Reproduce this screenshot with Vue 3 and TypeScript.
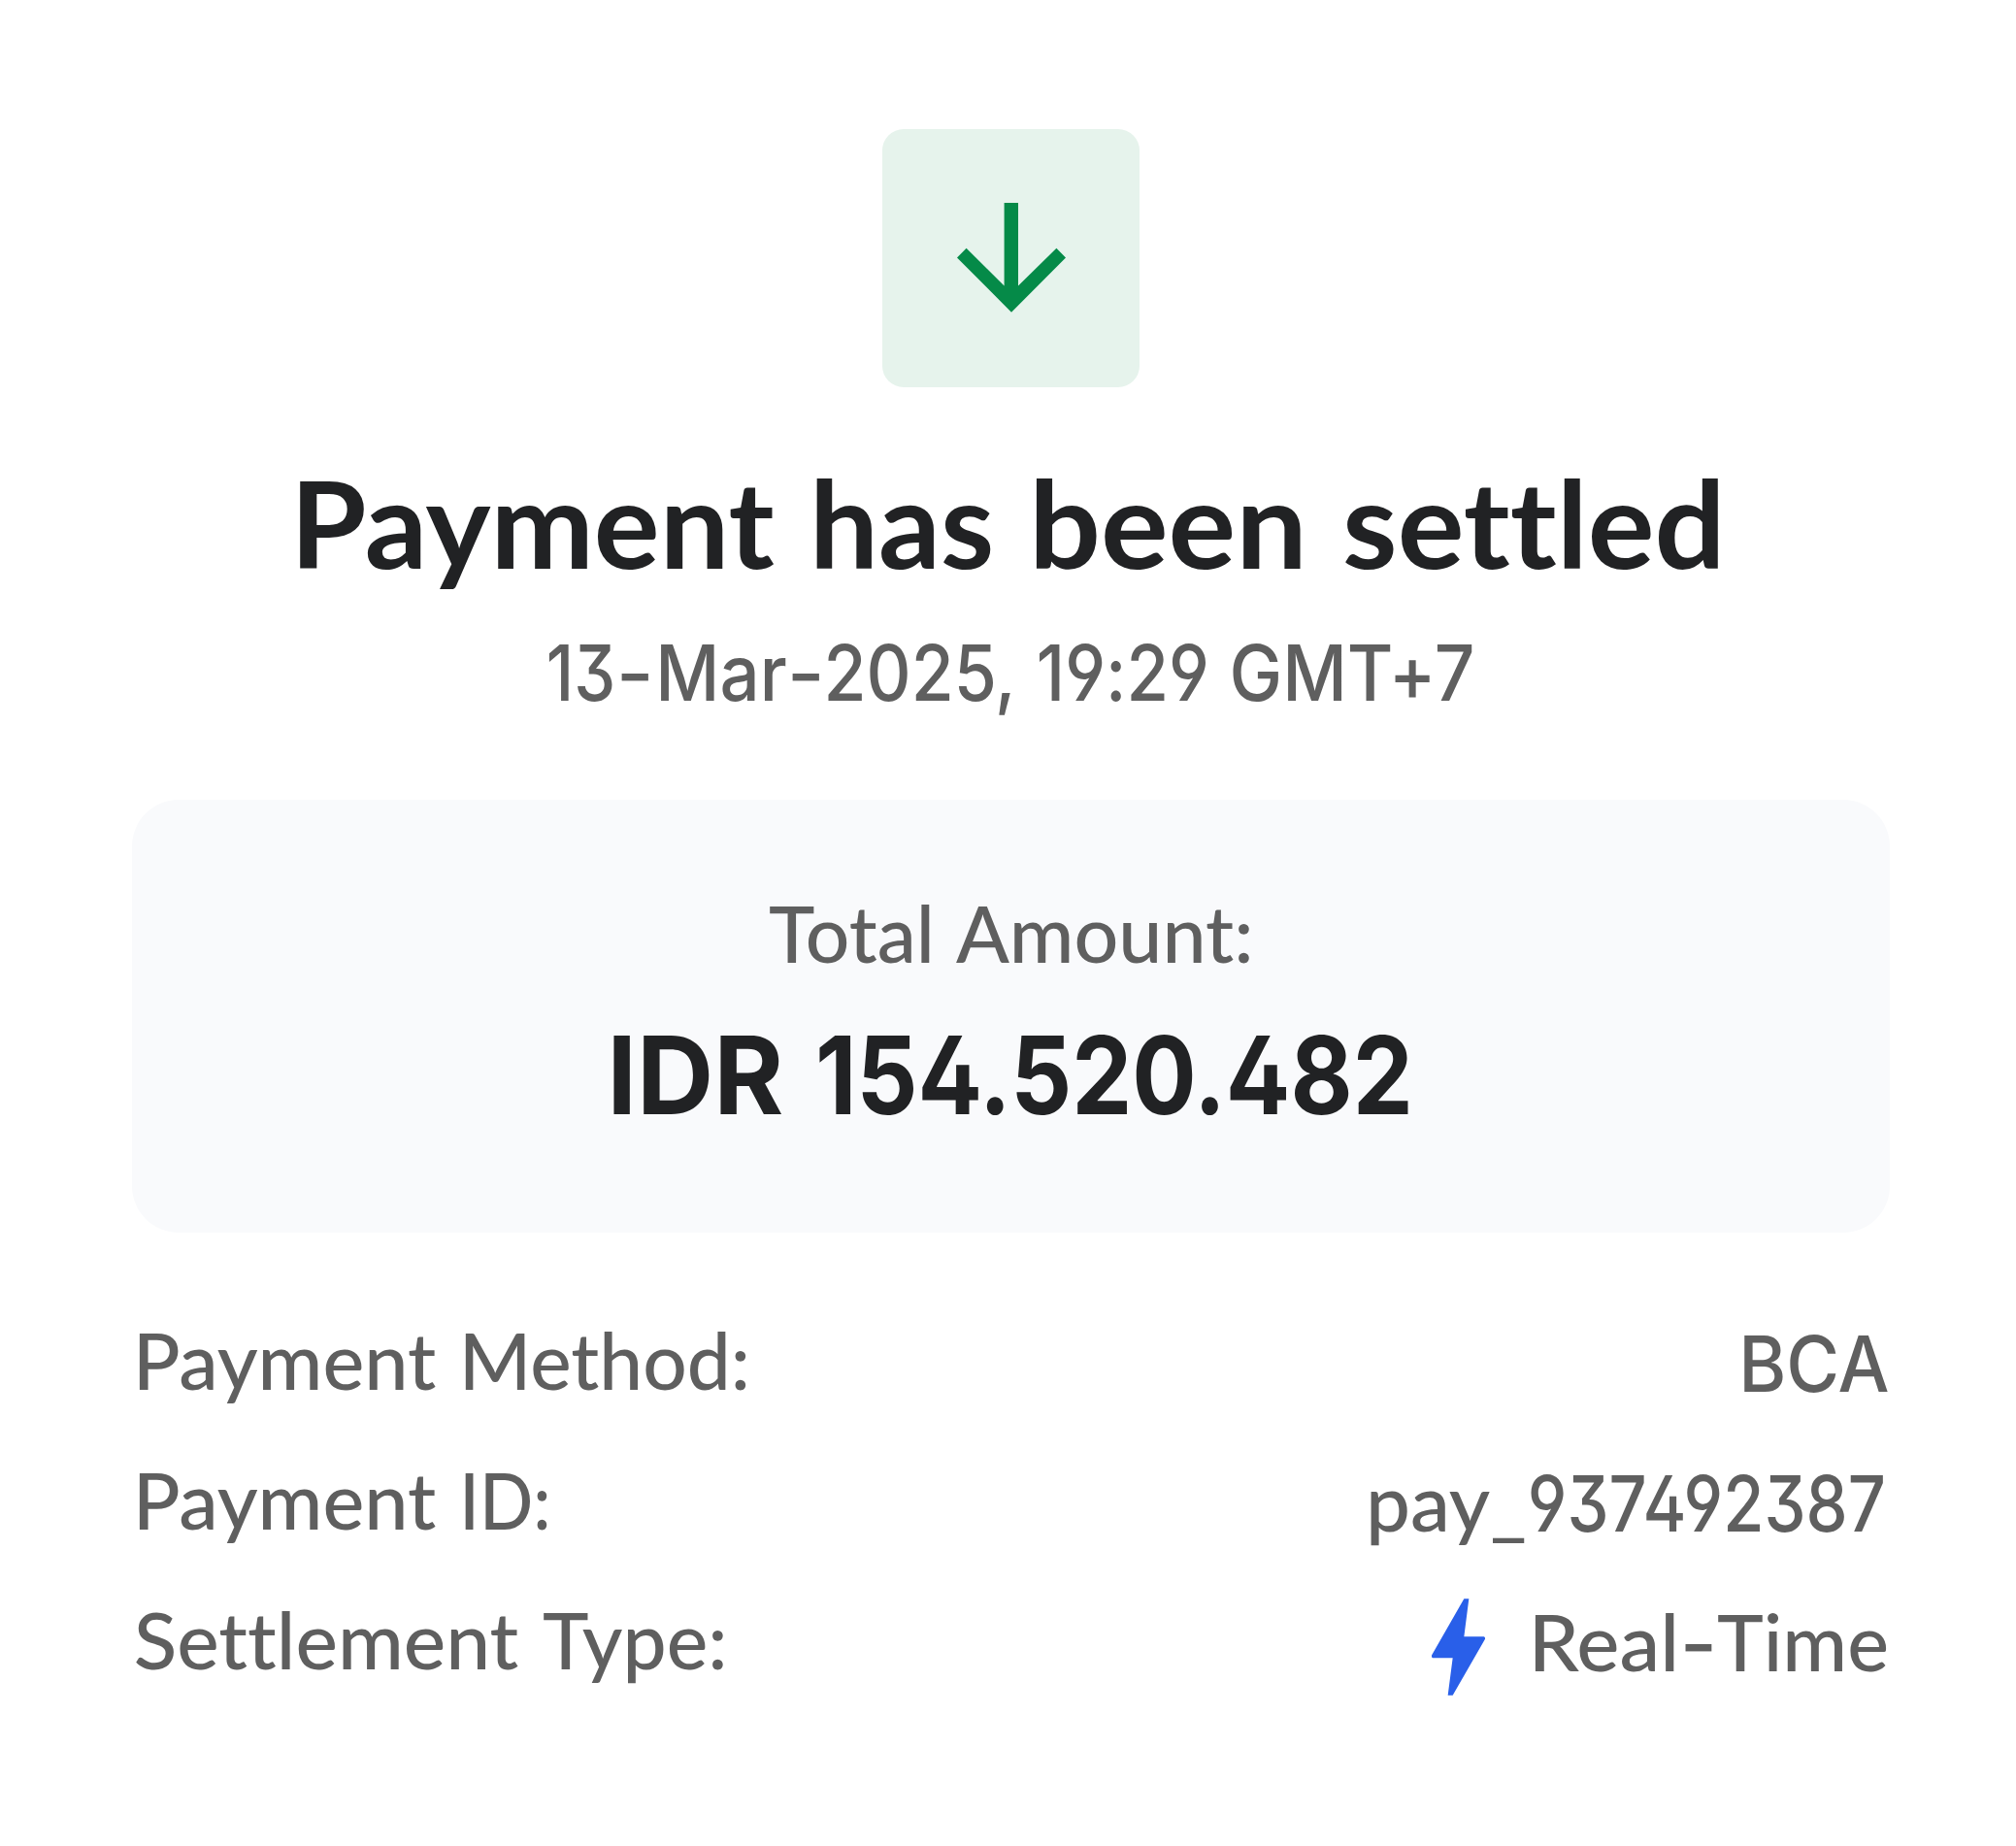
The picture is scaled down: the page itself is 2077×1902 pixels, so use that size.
<script setup lang="ts">
type Face = 'text' | 'figure'

interface Word {
  text: string
  /* Visible width of the word, in px */
  width: number
  /* Space in front of the word, in px */
  gap: number
  face: Face
  /* True when the word continues the previous one without a space */
  joined?: boolean
}

interface Fitted extends Word {
  scale: number
  shift: number
}

const ctx = document.createElement('canvas').getContext('2d')!

/* Sets every word to its visible width, whatever the installed face's own widths are. */
function fit(words: Word[], size: number, bold = false): Fitted[] {
  return words.map((word) => {
    const family = word.face === 'figure' ? 'Inter' : 'Lato'
    const weight = bold ? 700 : 500
    const fontSize = word.face === 'figure' ? size * 0.985 : size
    ctx.font = `${weight} 1000px "${family}"`
    // Non-zero tracking switches ligatures off, as the stylesheet does
    ctx.letterSpacing = '0.01px'
    const m = ctx.measureText(word.text)
    const left = (-m.actualBoundingBoxLeft * fontSize) / 1000
    const ink = ((m.actualBoundingBoxLeft + m.actualBoundingBoxRight) * fontSize) / 1000
    const scale = word.width / ink
    return { ...word, scale, shift: -left * scale }
  })
}

const t = (text: string, width: number, gap: number): Word => ({ text, width, gap, face: 'text' })
const f = (text: string, width: number, gap: number): Word => ({ text, width, gap, face: 'figure' })
const j = (word: Word): Word => ({ ...word, joined: true })

const title = fit([t('Payment', 489, -3), t('has', 182, 42.5), t('been', 274.4, 44), t('settled', 386, 44.6)], 124, true)

const date = fit(
  [
    f('13', 65.8, -1),
    j(f('-', 29, 9.2)),
    j(f('Mar', 128.8, 12.2)),
    j(f('-', 29, 7)),
    j(f('2025,', 188.8, 8)),
    f('19:29', 177.5, 27.7),
    f('GMT+7', 246.5, 23),
  ],
  80.5,
)

const amountLabel = fit([t('Total', 165.5, -3.5), t('Amount:', 302.5, 28)], 80.5)
const amount = fit([f('IDR', 173.5, 0.3), f('154.520.482', 607.7, 37)], 113, true)

const details = [
  {
    label: fit([t('Payment', 306, 7), t('Method:', 290, 29.5)], 80.5),
    value: fit([f('BCA', 148, 0)], 80.5),
    inset: 1.5,
    instant: false,
  },
  {
    label: fit([t('Payment', 306, 7), t('ID:', 85, 29.5)], 80.5),
    value: fit([t('pay_', 159, 0), j(f('937492387', 371, 5.5))], 80.5),
    inset: -1,
    instant: false,
  },
  {
    label: fit([t('Settlement', 395, 3), t('Type:', 186.5, 25)], 80.5),
    value: fit([t('Real', 143.5, 0), j(f('-', 28.5, 11.5)), j(t('Time', 174.5, 4.5))], 80.5),
    inset: 3,
    instant: true,
  },
]
</script>

<template>
  <main class="receipt">
    <div class="badge">
      <svg class="arrow" viewBox="0 0 112 113" aria-hidden="true">
        <path d="M48.6 0H63V85.6L102.4 46.8L112 56.4L56 112.7L0 56.4L9.6 46.8L48.6 85.6Z" />
      </svg>
    </div>

    <h1 class="line title">
      <template v-for="(w, i) in title" :key="i"
        ><span class="gap" :style="{ marginRight: w.gap + 'px' }">{{ i && !w.joined ? ' ' : '' }}</span
        ><span class="word" :class="w.face" :style="{ width: w.width + 'px' }"
          ><span class="ink" :style="{ transform: `translateX(${w.shift}px) scaleX(${w.scale})` }">{{ w.text }}</span></span
        ></template
      >
    </h1>

    <p class="line date">
      <template v-for="(w, i) in date" :key="i"
        ><span class="gap" :style="{ marginRight: w.gap + 'px' }">{{ i && !w.joined ? ' ' : '' }}</span
        ><span class="word" :class="w.face" :style="{ width: w.width + 'px' }"
          ><span class="ink" :style="{ transform: `translateX(${w.shift}px) scaleX(${w.scale})` }">{{ w.text }}</span></span
        ></template
      >
    </p>

    <section class="panel">
      <p class="line">
        <template v-for="(w, i) in amountLabel" :key="i"
          ><span class="gap" :style="{ marginRight: w.gap + 'px' }">{{ i && !w.joined ? ' ' : '' }}</span
          ><span class="word" :class="w.face" :style="{ width: w.width + 'px' }"
            ><span class="ink" :style="{ transform: `translateX(${w.shift}px) scaleX(${w.scale})` }">{{ w.text }}</span></span
          ></template
        >
      </p>
      <p class="line amount">
        <template v-for="(w, i) in amount" :key="i"
          ><span class="gap" :style="{ marginRight: w.gap + 'px' }">{{ i && !w.joined ? ' ' : '' }}</span
          ><span class="word" :class="w.face" :style="{ width: w.width + 'px' }"
            ><span class="ink" :style="{ transform: `translateX(${w.shift}px) scaleX(${w.scale})` }">{{ w.text }}</span></span
          ></template
        >
      </p>
    </section>

    <dl class="details">
      <div v-for="(row, r) in details" :key="r" class="row">
        <dt class="line">
          <template v-for="(w, i) in row.label" :key="i"
            ><span class="gap" :style="{ marginRight: w.gap + 'px' }">{{ i && !w.joined ? ' ' : '' }}</span
            ><span class="word" :class="w.face" :style="{ width: w.width + 'px' }"
              ><span class="ink" :style="{ transform: `translateX(${w.shift}px) scaleX(${w.scale})` }">{{ w.text }}</span></span
            ></template
          >
        </dt>
        <dd class="value" :style="{ marginRight: row.inset + 'px' }">
          <svg v-if="row.instant" class="bolt" viewBox="0 0 165 299" aria-hidden="true">
            <path d="M100 0H115L100 117H161Q166 118 165 125L65 299H50L65 183H3Q-1 182 0 175Z" />
          </svg>
          <span class="line"
            ><template v-for="(w, i) in row.value" :key="i"
              ><span class="gap" :style="{ marginRight: w.gap + 'px' }">{{ i && !w.joined ? ' ' : '' }}</span
              ><span class="word" :class="w.face" :style="{ width: w.width + 'px' }"
                ><span class="ink" :style="{ transform: `translateX(${w.shift}px) scaleX(${w.scale})` }">{{ w.text }}</span></span
              ></template
            ></span
          >
        </dd>
      </div>
    </dl>
  </main>
</template>

<style>
body {
  margin: 0;
  background: #ffffff;
}
</style>

<style scoped>
.receipt {
  --size: 80.5px;
  box-sizing: border-box;
  display: flex;
  flex-direction: column;
  align-items: stretch;
  width: 2077px;
  height: 1902px;
  padding: 133px 130.5px 0 136px;
  overflow: hidden;
  background: #ffffff;
  color: #5f5f5f;
}

.badge {
  display: flex;
  align-items: center;
  justify-content: center;
  align-self: center;
  width: 265.5px;
  height: 265.5px;
  border-radius: 22px;
  background: #e6f3ec;
}

.arrow {
  width: 112px;
  height: 113px;
  margin-left: 1px;
  fill: #058a48;
}

.line {
  display: block;
  margin: 0;
  font-family: Lato, sans-serif;
  font-size: var(--size);
  font-weight: 500;
  line-height: 90px;
  height: 90px;
  letter-spacing: 0.01px;
  font-variant-ligatures: none;
  white-space: nowrap;
  text-align: center;
}

.gap {
  display: inline-block;
  width: 0;
  white-space: pre;
}

.word {
  display: inline-block;
  text-align: left;
}

.ink {
  display: inline-block;
  transform-origin: 0 50%;
}

.figure {
  font-family: Inter, sans-serif;
  font-size: 0.985em;
  font-feature-settings: 'cv09', 'ss01';
}

.title {
  --size: 124px;
  margin-top: 79.5px;
  height: 120px;
  line-height: 120px;
  font-weight: 700;
  color: #212224;
}

.date {
  margin-top: 47.5px;
}

.panel {
  box-sizing: border-box;
  height: 446px;
  margin-top: 88.5px;
  padding-top: 91.5px;
  border-radius: 48px;
  background: #f9fafc;
}

.amount {
  --size: 113px;
  margin-top: 43.5px;
  height: 110px;
  line-height: 110px;
  font-weight: 700;
  color: #212224;
}

.details {
  display: flex;
  flex-direction: column;
  gap: 54.2px;
  margin: 86px 0 0;
}

.row {
  display: flex;
  justify-content: space-between;
  height: 90px;
}

.value {
  display: flex;
  align-items: flex-start;
  margin: 0;
  padding-top: 1.5px;
}

.bolt {
  flex: none;
  width: 55px;
  height: 100px;
  margin: 1px 51px -12px 0;
  fill: #295fe9;
}
</style>
